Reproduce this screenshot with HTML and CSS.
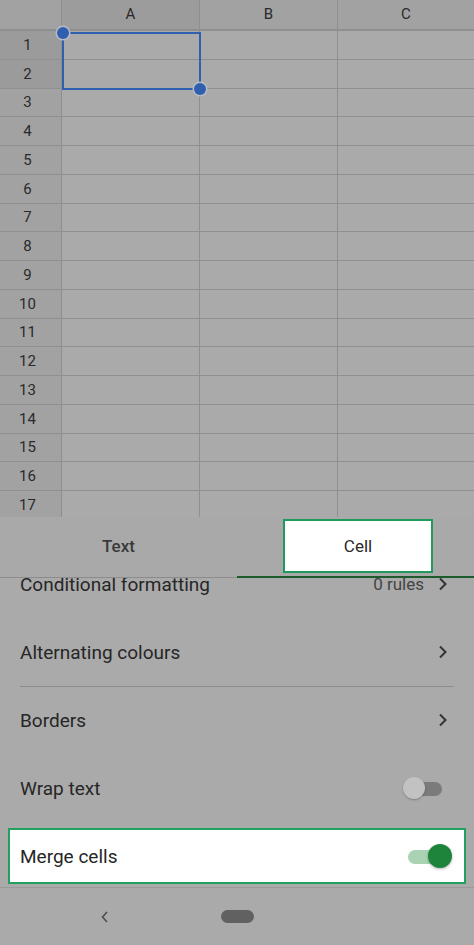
FILE: index.html
```html
<!DOCTYPE html>
<html>
<head>
<meta charset="utf-8">
<link rel="stylesheet" href="styles.css">
</head>
<body>
<div class="screen">
  <div class="sheet">
    <div class="grid">
      <div class="corner"></div>
      <div class="colhead sel">A</div>
      <div class="colhead">B</div>
      <div class="colhead">C</div>
    </div>
    <div class="grid body" id="rows"></div>
    <div class="selection"></div>
    <div class="handle h1"></div>
    <div class="handle h2"></div>
  </div>
  <div class="panel">
    <div class="tabs">
      <div class="tab">Text</div>
      <div class="tab active"><span class="tab-box">Cell</span></div>
    </div>
    <div class="list">
      <div class="items">
        <div class="item"><span class="label">Conditional formatting</span><span class="meta">0 rules</span><svg class="chev" viewBox="0 0 10 14"><path d="M2 1.5 L7.5 7 L2 12.5" /></svg></div>
        <div class="item"><span class="label">Alternating colours</span><svg class="chev" viewBox="0 0 10 14"><path d="M2 1.5 L7.5 7 L2 12.5" /></svg></div>
        <div class="divider"></div>
        <div class="item"><span class="label">Borders</span><svg class="chev" viewBox="0 0 10 14"><path d="M2 1.5 L7.5 7 L2 12.5" /></svg></div>
        <div class="item"><span class="label">Wrap text</span><span class="switch off"><span class="track"></span><span class="knob"></span></span></div>
        <div class="item hl"><div class="hl-box"><span class="label">Merge cells</span><span class="switch on"><span class="track"></span><span class="knob"></span></span></div></div>
      </div>
    </div>
  </div>
  <div class="navbar">
    <svg class="back" viewBox="0 0 10 14"><path d="M7 2 L2.5 7 L7 12" /></svg>
    <span class="pill"></span>
  </div>
</div>
<script>
  var rows = document.getElementById('rows');
  var html = '';
  for (var i = 1; i <= 17; i++) {
    html += '<div class="rowhead' + (i <= 2 ? ' sel' : '') + '">' + i + '</div><div class="cell"></div><div class="cell"></div><div class="cell last"></div>';
  }
  rows.innerHTML = html;
</script>
</body>
</html>
```

FILE: styles.css
```css
* { box-sizing: border-box; }
html, body { margin: 0; padding: 0; }
body {
  font-family: Roboto, "Noto Sans", Arial, sans-serif;
  background: #a9a9a9;
  color: #262626;
}
.screen {
  width: 474px;
  height: 945px;
  display: flex;
  flex-direction: column;
  overflow: hidden;
  background: #aaaaaa;
}
.sheet {
  position: relative;
  height: 517px;
  flex: none;
  overflow: hidden;
  background: #aaaaaa;
}
.grid {
  display: grid;
  grid-template-columns: 62px 138px 138px 136px;
}
.grid:first-child { grid-template-rows: 31px; }
.grid.body { grid-auto-rows: 28.75px; }
.corner, .colhead {
  background: #a2a2a2;
  border-bottom: 2px solid #8f8f8f;
  border-right: 1px solid #8f8f8f;
}
.colhead {
  font-size: 15px;
  color: #2a2a2a;
  display: flex;
  align-items: center;
  justify-content: center;
  padding-bottom: 1px;
}
.colhead.sel { background: #9c9c9c; }
.colhead:last-child { border-right: none; }
.rowhead {
  background: #a2a2a2;
  border-right: 1px solid #8f8f8f;
  border-bottom: 1px solid #8f8f8f;
  font-size: 15px;
  color: #2a2a2a;
  display: flex;
  align-items: center;
  justify-content: center;
  padding-right: 6px;
}
.rowhead.sel { background: #9b9b9b; }
.cell {
  background: #aaaaaa;
  border-right: 1px solid #8f8f8f;
  border-bottom: 1px solid #8f8f8f;
}
.cell.last { border-right: none; }
.selection {
  position: absolute;
  left: 62px;
  top: 32px;
  width: 139px;
  height: 58px;
  border: 2.5px solid #2f5fae;
}
.handle {
  position: absolute;
  width: 12px;
  height: 12px;
  border-radius: 50%;
  background: #2f5fae;
  box-shadow: 0 0 0 1.5px #b8bcc4;
}
.h1 { left: 57px; top: 27px; }
.h2 { left: 194px; top: 83px; }

.panel {
  flex: none;
  display: flex;
  flex-direction: column;
  height: 370px;
  background: #aaaaaa;
}
.tabs {
  height: 61px;
  flex: none;
  display: grid;
  grid-template-columns: 237px 237px;
  background: #a9a9a9;
  border-bottom: 1px solid #8c8c8c;
  position: relative;
  z-index: 2;
}
.tab {
  display: flex;
  align-items: center;
  justify-content: center;
  font-size: 17px;
  font-weight: 500;
  color: #3a3a3a;
  padding-bottom: 2px;
}
.tab.active {
  border-bottom: 2px solid #1d5a2c;
  margin-bottom: -1px;
  padding: 2px 0 1px 46px;
  align-items: flex-start;
  justify-content: flex-start;
}
.tab-box {
  width: 150px;
  height: 54px;
  background: #ffffff;
  border: 2px solid #1f9a5c;
  display: flex;
  align-items: center;
  justify-content: center;
  color: #2a2a2a;
  font-weight: 400;
  font-size: 17px;
}
.list {
  flex: 1;
  overflow: hidden;
  position: relative;
  z-index: 1;
}
.items { margin-top: -28px; }
.item {
  height: 68px;
  display: flex;
  align-items: center;
  padding: 0 26px 0 20px;
  font-size: 19px;
  color: #262626;
}
.label { flex: 1; }
.meta {
  font-size: 17px;
  color: #444;
  margin-right: 14px;
}
.chev {
  width: 10px;
  height: 14px;
  fill: none;
  stroke: #333;
  stroke-width: 2;
}
.divider {
  height: 1px;
  background: #8d8d8d;
  margin: 0 20px;
  margin-bottom: -1px;
  position: relative;
}
.switch {
  position: relative;
  width: 44px;
  height: 24px;
  display: inline-block;
}
.track {
  position: absolute;
  left: 8px;
  top: 6px;
  width: 34px;
  height: 14px;
  border-radius: 7px;
}
.knob {
  position: absolute;
  top: 1px;
  width: 22px;
  height: 22px;
  border-radius: 50%;
}
.switch.off { margin-right: 6px; width: 39px; }
.switch.off .track { background: #7b7b7b; left: 10px; width: 29px; }
.switch.off .knob { left: 0; background: #c2c2c2; box-shadow: 0 1px 2px rgba(0,0,0,0.25); }
.item.hl { padding: 6px 8px 6px 8px; }
.hl-box {
  flex: 1;
  height: 56px;
  background: #ffffff;
  border: 2px solid #22a05e;
  display: flex;
  align-items: center;
  padding: 0 12px 0 10px;
}
.switch.on { margin-right: 0; }
.switch.on .track { background: #a9d3b2; left: 0; width: 34px; }
.switch.on .knob { left: 20px; top: 0; width: 24px; height: 24px; background: #1e843b; box-shadow: 0 1px 3px rgba(0,0,0,0.3); }

.navbar {
  flex: 1;
  background: #aaaaaa;
  border-top: 1px solid #9a9a9a;
  display: flex;
  align-items: center;
  position: relative;
}
.back {
  position: absolute;
  left: 100px;
  top: 22px;
  width: 10px;
  height: 14px;
  fill: none;
  stroke: #4e4e4e;
  stroke-width: 1.6;
}
.pill {
  position: absolute;
  left: 221px;
  top: 22px;
  width: 33px;
  height: 13px;
  border-radius: 7px;
  background: #616161;
}
```
